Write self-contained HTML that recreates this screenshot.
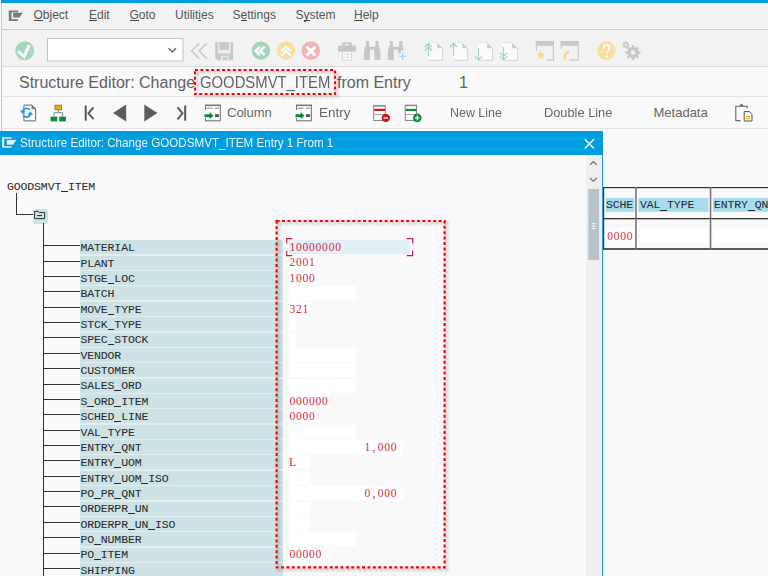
<!DOCTYPE html>
<html><head><meta charset="utf-8"><style>
*{margin:0;padding:0;box-sizing:border-box}
html,body{width:768px;height:576px;overflow:hidden;background:#f9f9f9;font-family:"Liberation Sans",sans-serif;position:relative}
.a{position:absolute}
.t{position:absolute;white-space:nowrap;line-height:1}
.menu{font-size:12px;color:#555;top:9px}
.menu u{text-decoration:none;position:relative}
.menu u:after{content:"";position:absolute;left:0;right:0;top:12px;height:1px;background:#444}
.atb{font-size:13px;color:#666;top:105.6px}
.mono{font-family:"Liberation Mono",monospace}
.lbl{position:absolute;left:80px;width:203px;height:14px;background:#cce2e5}
.lt{position:absolute;left:80.5px;font-family:"Liberation Mono",monospace;font-size:11.5px;letter-spacing:-0.13px;color:#2a2a2a;line-height:14px;white-space:nowrap;-webkit-text-stroke:0.05px #2a2a2a}
.lt i{display:inline-block;width:6.77px;height:1px;background:#2a2a2a;vertical-align:-2.3px}
.hc{position:absolute;left:43px;width:37px;height:1px;background:#333}
.vf{position:absolute;left:289px;height:14px;background:#fff}
.vt{position:absolute;font-family:"Liberation Serif",serif;font-size:11.6px;color:#d42c3c;line-height:14px;white-space:nowrap}
.vt span{display:inline-block;width:6.56px;text-align:center}
</style></head><body>
<div class="a" style="left:0;top:0;width:768px;height:3px;background:#009ddf"></div>
<div class="a" style="left:0;top:3px;width:768px;height:1px;background:#fbf5f1"></div>
<div class="a" style="left:0;top:4px;width:768px;height:25px;background:#f2f2f2"></div>
<div class="a" style="left:0;top:29px;width:768px;height:1px;background:#cacaca"></div>
<div class="a" style="left:0;top:30px;width:768px;height:36px;background:#f2f2f2"></div>
<div class="a" style="left:0;top:66px;width:768px;height:1px;background:#dcdcdc"></div>
<div class="a" style="left:0;top:96px;width:768px;height:1px;background:#e4e4e4"></div>
<div class="a" style="left:0;top:128px;width:768px;height:1px;background:#e4e4e4"></div>
<div class="a" style="left:0;top:0;width:1px;height:131px;background:#fafafa"></div>
<div class="a" style="left:1px;top:3px;width:1px;height:128px;background:#c8c8c8"></div>
<svg class="a" style="left:8px;top:10px" width="16" height="12" viewBox="0 0 16 12">
<path d="M0.8 0.6H10V2.2H3.5V9.3H10V10.9H0.8Z" fill="#7a7a7a"/><path d="M5.1 2.8H14.8L11.6 7.5H5.1Z" fill="#7a7a7a"/></svg>
<div class="t menu" style="left:33.5px"><u>O</u>bject</div>
<div class="t menu" style="left:89px"><u>E</u>dit</div>
<div class="t menu" style="left:129.5px"><u>G</u>oto</div>
<div class="t menu" style="left:175px">Utilit<u>i</u>es</div>
<div class="t menu" style="left:232.5px">S<u>e</u>ttings</div>
<div class="t menu" style="left:295.5px">S<u>y</u>stem</div>
<div class="t menu" style="left:354px"><u>H</u>elp</div>

<svg class="a" style="left:0;top:30px" width="768" height="36" viewBox="0 30 768 36">
 <circle cx="24.7" cy="50.8" r="9.5" fill="#a8d6bd"/>
 <path d="M19.3 52.3L23.9 56.6L28.6 46.6" fill="none" stroke="#fff" stroke-width="3" stroke-linecap="square"/>
 <rect x="47.5" y="38.5" width="135.5" height="22.5" fill="#fff" stroke="#c2c2c2" stroke-width="1"/>
 <path d="M168.5 48.3L172.3 52L176.1 48.3" fill="none" stroke="#666" stroke-width="1.3"/>
 <path d="M199.2 43.4L191.6 50.9L199.2 58.6M206.7 43.4L199.1 50.9L206.7 58.6" fill="none" stroke="#cbcbcb" stroke-width="1.6"/>
 <path d="M215.2 42.1H233.1V60.3H217.5L215.2 58Z" fill="#c9c9c9"/>
 <rect x="217.8" y="42.1" width="12.7" height="11.4" fill="#efefef"/>
 <rect x="219.2" y="42.1" width="9.8" height="7.8" fill="#c9c9c9"/>
 <rect x="220.8" y="55.8" width="7.6" height="4.5" fill="#e6e6e6"/>
 <rect x="223" y="57" width="4" height="3.3" fill="#c9c9c9"/>
 <circle cx="260.9" cy="50.6" r="9.2" fill="#a3d5b9"/>
 <path d="M259.8 46.6L255.6 50.8L259.8 55M264.6 46.6L260.4 50.8L264.6 55" fill="none" stroke="#fff" stroke-width="2.5"/>
 <circle cx="286" cy="50.6" r="9.2" fill="#f8dea2"/>
 <path d="M281.2 51.2L286 47L290.8 51.2M281.2 55.4L286 51.2L290.8 55.4" fill="none" stroke="#fff" stroke-width="2.3"/>
 <circle cx="310.8" cy="50.6" r="9.3" fill="#f0b5b6"/>
 <path d="M306.6 46.8L315.2 55.4M315.2 46.8L306.6 55.4" fill="none" stroke="#fff" stroke-width="3"/>
 <!-- printer -->
 <rect x="342.1" y="42.3" width="9.7" height="4" rx="1" fill="#c9c9c9"/>
 <rect x="344.8" y="43.8" width="4.3" height="2.5" fill="#ededed"/>
 <rect x="338" y="45.6" width="18" height="6.2" rx="1.2" fill="#c6c6c6"/>
 <rect x="352" y="46.4" width="3" height="1.2" fill="#9ed4ee"/>
 <rect x="342.6" y="51.6" width="9" height="8.6" fill="#fafafa" stroke="#d2d2d2" stroke-width="0.9"/>
 <rect x="344.6" y="53.9" width="5" height="0.9" fill="#b0dbf0"/>
 <rect x="344.6" y="56.8" width="5" height="0.9" fill="#b0dbf0"/>
 <!-- binoculars -->
 <g fill="#c7c7c7">
 <path d="M366 41H369V45.2L370 47.5V59.2Q370 60 369.2 60H364.8Q364 60 364 59.2V52L365.2 47L366 45.2Z"/>
 <path d="M375.5 41H378.5V45.2L379.3 47L380.4 52V59.2Q380.4 60 379.6 60H375.2Q374.4 60 374.4 59.2V47.5L375.5 45.2Z"/>
 <rect x="369.5" y="46.8" width="5.4" height="2.8"/>
 <path d="M389.8 41H392.8V45.2L393.8 47.5V59.2Q393.8 60 393 60H388.6Q387.8 60 387.8 59.2V52L389 47L389.8 45.2Z"/>
 <path d="M399.3 41H402.3V45.2L403.1 47L403.6 50.6H400.8V53.6H398.2V47.5L399.3 45.2Z"/>
 <rect x="393.3" y="46.8" width="5.4" height="2.8"/>
 </g>
 <path d="M402.6 53V60.1M399 56.3H406.2" stroke="#92d0ee" stroke-width="1.1"/>
 <!-- pages -->
 <path d="M428.1 42.7H437.1L442.6 48.2V60.3H428.1Z" fill="#fbfbfb"/><path d="M442.6 48V60.3H428.6" fill="none" stroke="#d2d2d2" stroke-width="1"/><path d="M437.1 42.7V48.2H442.6Z" fill="#cdcdcd"/><path d="M428.1 42.7H437.1" stroke="#e4e4e4" stroke-width="1"/><path d="M428.5 43.5V56M424.9 47L428.5 43.5L432.1 47M424.9 50.5L428.5 47L432.1 50.5" fill="none" stroke="#9ed3b4" stroke-width="1.1"/><path d="M453.2 42.7H462.2L467.7 48.2V60.3H453.2Z" fill="#fbfbfb"/><path d="M467.7 48V60.3H453.7" fill="none" stroke="#d2d2d2" stroke-width="1"/><path d="M462.2 42.7V48.2H467.7Z" fill="#cdcdcd"/><path d="M453.2 42.7H462.2" stroke="#e4e4e4" stroke-width="1"/><path d="M453.59999999999997 43.5V56M449.99999999999994 47L453.59999999999997 43.5L457.2 47" fill="none" stroke="#9ed3b4" stroke-width="1.1"/><path d="M478.1 42.7H487.1L492.6 48.2V60.3H478.1Z" fill="#fbfbfb"/><path d="M492.6 48V60.3H478.6" fill="none" stroke="#d2d2d2" stroke-width="1"/><path d="M487.1 42.7V48.2H492.6Z" fill="#cdcdcd"/><path d="M478.1 42.7H487.1" stroke="#e4e4e4" stroke-width="1"/><path d="M478.5 48V59.8M474.9 56.3L478.5 59.8L482.1 56.3" fill="none" stroke="#9ed3b4" stroke-width="1.1"/><path d="M503.2 42.7H512.2L517.7 48.2V60.3H503.2Z" fill="#fbfbfb"/><path d="M517.7 48V60.3H503.7" fill="none" stroke="#d2d2d2" stroke-width="1"/><path d="M512.2 42.7V48.2H517.7Z" fill="#cdcdcd"/><path d="M503.2 42.7H512.2" stroke="#e4e4e4" stroke-width="1"/><path d="M503.59999999999997 47V59.8M499.99999999999994 52.8L503.59999999999997 56.3L507.2 52.8M499.99999999999994 56.3L503.59999999999997 59.8L507.2 56.3" fill="none" stroke="#9ed3b4" stroke-width="1.1"/>
 <!-- windows -->
 <rect x="535.8" y="41" width="18.2" height="4.8" fill="#c9c9c9"/>
 <path d="M536.4 45.5V51M553.4 45.5V60.2H546.6" fill="none" stroke="#c9c9c9" stroke-width="1.2"/>
 <path d="M540.8 50.6L542.1 53.6L545.3 53.8L542.8 55.9L543.7 59L540.8 57.3L537.9 59L538.8 55.9L536.3 53.8L539.5 53.6Z" fill="#f5d88c"/>
 <rect x="560.5" y="41" width="18.4" height="4.8" fill="#c9c9c9"/>
 <path d="M561.1 45.5V48.5M578.3 45.5V60.2H568.9" fill="none" stroke="#c9c9c9" stroke-width="1.2"/>
 <path d="M564.5 60C563 57 563.2 54 566 52.3L565.5 50.8L569.8 51.2L568.3 55L567.5 53.8C566 55 565.8 57.3 566.6 59.5Z" fill="#f5d88c"/>
 <circle cx="606.4" cy="50.6" r="9.3" fill="#f8dfa4"/>
 <path d="M603.6 48.4C603.6 46 605 44.9 606.6 44.9C608.4 44.9 609.6 46.1 609.6 47.8C609.6 50 607 50.3 607 53V53.6" fill="none" stroke="#fff" stroke-width="1.6"/>
 <rect x="606.1" y="55.4" width="1.8" height="1.8" fill="#fff"/>
 <!-- gears -->
 <g fill="#c8c8c8">
  <circle cx="633" cy="52.6" r="5.6"/>
  <g stroke="#c8c8c8" stroke-width="2.6">
   <path d="M633 45.2V60M625.6 52.6H640.4M627.8 47.4L638.2 57.8M638.2 47.4L627.8 57.8"/>
  </g>
  <circle cx="625.9" cy="44.8" r="2.6"/>
  <g stroke="#c8c8c8" stroke-width="1.3"><path d="M625.9 41.2V48.4M622.3 44.8H629.5M623.4 42.3L628.4 47.3M628.4 42.3L623.4 47.3"/></g>
 </g>
 <circle cx="633" cy="52.6" r="2.3" fill="#f2f2f2"/>
 <circle cx="625.9" cy="44.8" r="1.1" fill="#f2f2f2"/>
</svg>
<div class="t" style="left:19px;top:74.6px;font-size:16px;color:#626262">Structure Editor: Change</div>
<div class="t" style="left:200px;top:74.6px;font-size:16px;color:#626262;transform:scaleX(0.928);transform-origin:0 0">GOODSMVT_ITEM</div>
<div class="t" style="left:337px;top:74.6px;font-size:16px;color:#626262">from Entry</div>
<div class="t" style="left:459px;top:74.6px;font-size:16px;color:#626262">1</div>
<svg class="a" style="left:190px;top:66px;overflow:visible" width="150" height="32" viewBox="190 66 150 32">
<defs><filter id="sh" x="-20%" y="-50%" width="140%" height="200%"><feGaussianBlur in="SourceAlpha" stdDeviation="1.5"/><feOffset dx="1.5" dy="1.5"/><feComponentTransfer><feFuncA type="linear" slope="0.35"/></feComponentTransfer><feMerge><feMergeNode/><feMergeNode in="SourceGraphic"/></feMerge></filter></defs>
<rect x="195" y="70.1" width="140.1" height="24" fill="none" stroke="#ff0000" stroke-width="2" stroke-dasharray="3 2.4" filter="url(#sh)"/>
</svg>
<svg class="a" style="left:0;top:97px" width="768" height="31" viewBox="0 97 768 31">
 <!-- refresh doc -->
 <path d="M23.9 105.1H32L35.6 108.7V120.9H23.9Z" fill="#fff" stroke="#666" stroke-width="1"/>
 <path d="M32 105.1V108.7H35.6" fill="#888" stroke="#666" stroke-width="0.8"/>
 <path d="M29.8 109.8A4.2 4.2 0 0 0 22.6 111.5" fill="none" stroke="#1a9fe6" stroke-width="1.8"/>
 <path d="M20 110.5L22.9 114.2L25.6 110.8Z" fill="#1a9fe6"/>
 <path d="M23.4 115.6A4.2 4.2 0 0 0 30.6 113.9" fill="none" stroke="#1a9fe6" stroke-width="1.8"/>
 <path d="M33.2 114.9L30.3 111.2L27.6 114.6Z" fill="#1a9fe6"/>
 <!-- hierarchy -->
 <rect x="54.9" y="105.1" width="6.8" height="4.8" fill="#f2aa00" stroke="#6b5a2e" stroke-width="0.6"/>
 <path d="M58.3 110V112.7M54 116.6V112.7H62.6V116.6" fill="none" stroke="#6a7e8a" stroke-width="0.9"/>
 <rect x="50.6" y="116.6" width="6.6" height="4.8" fill="#0f8b3a"/>
 <rect x="59.3" y="116.6" width="6.6" height="4.8" fill="#0f8b3a"/>
 <!-- first -->
 <path d="M85.7 105.4V120.7" stroke="#555" stroke-width="2"/>
 <path d="M93.5 107.4L88.4 113.3L93.5 119.2" fill="none" stroke="#555" stroke-width="1.9"/>
 <path d="M126.2 104.5V121.4L113 113Z" fill="#5c5c5c"/>
 <path d="M144.3 104.5V121.4L157.4 113Z" fill="#5c5c5c"/>
 <path d="M177.5 107.4L182.6 113.3L177.5 119.3" fill="none" stroke="#555" stroke-width="1.9"/>
 <path d="M185.2 105.5V120.7" stroke="#555" stroke-width="2"/>
 <!-- column/entry icons -->
 <path d="M205.0 104.9H220.8V121H205.0" fill="#fff"/><rect x="205.0" y="104.5" width="15.8" height="1.6" fill="#7a7a7a"/><path d="M220.3 105V120.8H205.0" fill="none" stroke="#666" stroke-width="1"/><path d="M205.5 105V110M205.5 118V121" fill="none" stroke="#777" stroke-width="1"/><rect x="206.6" y="107.6" width="6" height="1.2" fill="#9a9a9a"/><rect x="215.0" y="107.6" width="4" height="1.2" fill="#9a9a9a"/><path d="M204.5 114.2H209.6V112.3L213.6 115.7L209.6 119.1V117.2H204.5Z" fill="#0b8a36"/><rect x="215.0" y="114.2" width="4" height="2.8" fill="#555"/><path d="M296.0 104.9H311.8V121H296.0" fill="#fff"/><rect x="296.0" y="104.5" width="15.8" height="1.6" fill="#7a7a7a"/><path d="M311.3 105V120.8H296.0" fill="none" stroke="#666" stroke-width="1"/><path d="M296.5 105V110M296.5 118V121" fill="none" stroke="#777" stroke-width="1"/><rect x="297.6" y="107.6" width="6" height="1.2" fill="#9a9a9a"/><rect x="306.0" y="107.6" width="4" height="1.2" fill="#9a9a9a"/><path d="M295.5 114.2H300.6V112.3L304.6 115.7L300.6 119.1V117.2H295.5Z" fill="#0b8a36"/><rect x="306.0" y="114.2" width="4" height="2.8" fill="#555"/>
 <!-- delete row -->
 <rect x="373.7" y="105.6" width="11.6" height="14.8" fill="#fff" stroke="#777" stroke-width="0.9"/>
 <rect x="373.7" y="105.3" width="11.6" height="1.3" fill="#8a8a8a"/>
 <rect x="374.2" y="108.8" width="10.8" height="2.2" fill="#d11a1f"/>
 <rect x="374.2" y="114" width="10.8" height="0.9" fill="#999"/>
 <circle cx="385.8" cy="117.9" r="4.2" fill="#d0161c"/>
 <rect x="383.6" y="117.3" width="4.4" height="1.4" fill="#fff"/>
 <!-- insert row -->
 <rect x="405.2" y="105.2" width="11.4" height="15.2" fill="#fff" stroke="#777" stroke-width="0.9"/>
 <rect x="405.2" y="104.9" width="11.4" height="1.3" fill="#8a8a8a"/>
 <rect x="405.7" y="108.9" width="10.6" height="2.2" fill="#0f8b3a"/>
 <rect x="405.7" y="114" width="10.6" height="0.9" fill="#999"/>
 <circle cx="417.3" cy="117.9" r="4.3" fill="#0f8b3a"/>
 <path d="M415 117.9H419.6M417.3 115.6V120.2" stroke="#fff" stroke-width="1.2"/>
 <!-- clipboard -->
 <path d="M740.5 120.6H735.8V106.3H747.2V108.3" fill="none" stroke="#666" stroke-width="1.1"/>
 <path d="M739.6 106.3L741.5 104.4L743.4 106.3" fill="none" stroke="#666" stroke-width="1.1"/>
 <path d="M744.2 111.6H749.4L752 114.2V121H744.2Z" fill="#fff" stroke="#555" stroke-width="1"/>
 <rect x="745.8" y="116" width="4.4" height="1.1" fill="#f0a000"/>
 <rect x="745.8" y="118.1" width="4.4" height="1.1" fill="#f0a000"/>
</svg>
<div class="t atb" style="left:227px;transform:scaleX(1);transform-origin:0 0">Column</div>
<div class="t atb" style="left:318.5px;transform:scaleX(1.04);transform-origin:0 0">Entry</div>
<div class="t atb" style="left:449.5px;transform:scaleX(0.957);transform-origin:0 0">New Line</div>
<div class="t atb" style="left:543.5px;transform:scaleX(0.985);transform-origin:0 0">Double Line</div>
<div class="t atb" style="left:653.5px;transform:scaleX(1);transform-origin:0 0">Metadata</div>
<div class="a" style="left:0;top:131px;width:603px;height:24px;background:#009ddf"></div>
<svg class="a" style="left:0;top:131px" width="20" height="24" viewBox="0 131 20 24">
<path d="M2.1 137.2H11.5V138.8H4.2V146.2H11.5V147.8H2.1Z" fill="#e6eef3"/><path d="M6.9 140.1H16.3L13.1 144.7H6.9Z" fill="#e6eef3"/></svg>
<div class="t" style="left:19.5px;top:136.7px;font-size:12.5px;color:#eaf4fa;transform:scaleX(0.93);transform-origin:0 0">Structure Editor: Change GOODSMVT_ITEM Entry 1 From 1</div>
<svg class="a" style="left:580px;top:131px" width="23" height="24" viewBox="580 131 23 24">
<path d="M584.8 139.3L594 148.5M594 139.3L584.8 148.5" stroke="#eef6fb" stroke-width="1.6"/></svg>
<div class="a" style="left:586px;top:155px;width:16px;height:421px;background:#efefef"></div>
<div class="a" style="left:602px;top:155px;width:1px;height:421px;background:#1a9fe0"></div>
<svg class="a" style="left:586px;top:155px" width="16" height="110" viewBox="586 155 16 110">
<path d="M590 164.8L593.3 161.6L596.7 164.8M590 178L593.3 181.3L596.7 178" fill="none" stroke="#666" stroke-width="1.1"/>
<rect x="588.3" y="189" width="10.8" height="71" fill="#b7c2cb"/>
<rect x="591.8" y="223.2" width="3.8" height="1" fill="#fff"/>
<rect x="591.8" y="225.6" width="3.8" height="1" fill="#fff"/>
<rect x="591.8" y="228" width="3.8" height="1" fill="#fff"/>
</svg>
<div class="lt" style="left:7px;top:179.8px">GOODSMVT<i></i>ITEM</div>
<div class="a" style="left:16px;top:193px;width:1px;height:22px;background:#333"></div>
<div class="a" style="left:16px;top:214px;width:17px;height:1px;background:#333"></div>
<div class="a" style="left:33px;top:209px;width:15px;height:15px;background:#cce2e5;border-radius:2px"></div>
<svg class="a" style="left:33px;top:209px" width="15" height="15" viewBox="33 209 15 15">
<path d="M34.6 211.4H38.4L39.4 212.5H44.6V218.6H34.6Z" fill="none" stroke="#2a2a2a" stroke-width="0.95"/>
<rect x="37.2" y="215" width="4.8" height="1.1" fill="#333"/></svg>
<div class="a" style="left:43px;top:223px;width:1px;height:353px;background:#333"></div>
<div class="a" style="left:80px;top:254px;width:203px;height:322px;background:#e3edee"></div>
<div class="lbl" style="top:240.40px"></div>
<div class="hc" style="top:245.30px"></div>
<div class="lt" style="top:241px">MATERIAL</div>
<div class="vf" style="top:240.40px;width:121px;background:#e3eff7"></div>
<div class="vt" style="top:241.10px;left:289px"><span>1</span><span>0</span><span>0</span><span>0</span><span>0</span><span>0</span><span>0</span><span>0</span></div>
<div class="lbl" style="top:255.76px"></div>
<div class="hc" style="top:260.66px"></div>
<div class="lt" style="top:257px">PLANT</div>
<div class="vf" style="top:255.76px;width:27px"></div>
<div class="vt" style="top:256.46px;left:289px"><span>2</span><span>0</span><span>0</span><span>1</span></div>
<div class="lbl" style="top:271.12px"></div>
<div class="hc" style="top:276.02px"></div>
<div class="lt" style="top:272px">STGE<i></i>LOC</div>
<div class="vf" style="top:271.12px;width:27px"></div>
<div class="vt" style="top:271.82px;left:289px"><span>1</span><span>0</span><span>0</span><span>0</span></div>
<div class="lbl" style="top:286.48px"></div>
<div class="hc" style="top:291.38px"></div>
<div class="lt" style="top:287px">BATCH</div>
<div class="vf" style="top:286.48px;width:67px"></div>
<div class="lbl" style="top:301.84px"></div>
<div class="hc" style="top:306.74px"></div>
<div class="lt" style="top:303px">MOVE<i></i>TYPE</div>
<div class="vf" style="top:301.84px;width:20px"></div>
<div class="vt" style="top:302.54px;left:289px"><span>3</span><span>2</span><span>1</span></div>
<div class="lbl" style="top:317.20px"></div>
<div class="hc" style="top:322.10px"></div>
<div class="lt" style="top:318px">STCK<i></i>TYPE</div>
<div class="vf" style="top:317.20px;width:7px"></div>
<div class="lbl" style="top:332.56px"></div>
<div class="hc" style="top:337.46px"></div>
<div class="lt" style="top:333px">SPEC<i></i>STOCK</div>
<div class="vf" style="top:332.56px;width:7px"></div>
<div class="lbl" style="top:347.92px"></div>
<div class="hc" style="top:352.82px"></div>
<div class="lt" style="top:349px">VENDOR</div>
<div class="vf" style="top:347.92px;width:67px"></div>
<div class="lbl" style="top:363.28px"></div>
<div class="hc" style="top:368.18px"></div>
<div class="lt" style="top:364px">CUSTOMER</div>
<div class="vf" style="top:363.28px;width:67px"></div>
<div class="lbl" style="top:378.64px"></div>
<div class="hc" style="top:383.54px"></div>
<div class="lt" style="top:379px">SALES<i></i>ORD</div>
<div class="vf" style="top:378.64px;width:67px"></div>
<div class="lbl" style="top:394.00px"></div>
<div class="hc" style="top:398.90px"></div>
<div class="lt" style="top:395px">S<i></i>ORD<i></i>ITEM</div>
<div class="vf" style="top:394.00px;width:40px"></div>
<div class="vt" style="top:394.70px;left:289px"><span>0</span><span>0</span><span>0</span><span>0</span><span>0</span><span>0</span></div>
<div class="lbl" style="top:409.36px"></div>
<div class="hc" style="top:414.26px"></div>
<div class="lt" style="top:410px">SCHED<i></i>LINE</div>
<div class="vf" style="top:409.36px;width:27px"></div>
<div class="vt" style="top:410.06px;left:289px"><span>0</span><span>0</span><span>0</span><span>0</span></div>
<div class="lbl" style="top:424.72px"></div>
<div class="hc" style="top:429.62px"></div>
<div class="lt" style="top:426px">VAL<i></i>TYPE</div>
<div class="vf" style="top:424.72px;width:67px"></div>
<div class="lbl" style="top:440.08px"></div>
<div class="hc" style="top:444.98px"></div>
<div class="lt" style="top:441px">ENTRY<i></i>QNT</div>
<div class="vf" style="top:440.08px;width:114px"></div>
<div class="vt" style="top:440.78px;left:364.2px"><span>1</span><span>,</span><span>0</span><span>0</span><span>0</span></div>
<div class="lbl" style="top:455.44px"></div>
<div class="hc" style="top:460.34px"></div>
<div class="lt" style="top:456px">ENTRY<i></i>UOM</div>
<div class="vf" style="top:455.44px;width:20px"></div>
<div class="vt" style="top:456.14px;left:289px"><span>L</span></div>
<div class="lbl" style="top:470.80px"></div>
<div class="hc" style="top:475.70px"></div>
<div class="lt" style="top:472px">ENTRY<i></i>UOM<i></i>ISO</div>
<div class="vf" style="top:470.80px;width:20px"></div>
<div class="lbl" style="top:486.16px"></div>
<div class="hc" style="top:491.06px"></div>
<div class="lt" style="top:487px">PO<i></i>PR<i></i>QNT</div>
<div class="vf" style="top:486.16px;width:114px"></div>
<div class="vt" style="top:486.86px;left:364.2px"><span>0</span><span>,</span><span>0</span><span>0</span><span>0</span></div>
<div class="lbl" style="top:501.52px"></div>
<div class="hc" style="top:506.42px"></div>
<div class="lt" style="top:502px">ORDERPR<i></i>UN</div>
<div class="vf" style="top:501.52px;width:20px"></div>
<div class="lbl" style="top:516.88px"></div>
<div class="hc" style="top:521.78px"></div>
<div class="lt" style="top:518px">ORDERPR<i></i>UN<i></i>ISO</div>
<div class="vf" style="top:516.88px;width:20px"></div>
<div class="lbl" style="top:532.24px"></div>
<div class="hc" style="top:537.14px"></div>
<div class="lt" style="top:533px">PO<i></i>NUMBER</div>
<div class="vf" style="top:532.24px;width:67px"></div>
<div class="lbl" style="top:547.60px"></div>
<div class="hc" style="top:552.50px"></div>
<div class="lt" style="top:548px">PO<i></i>ITEM</div>
<div class="vf" style="top:547.60px;width:33px"></div>
<div class="vt" style="top:548.30px;left:289px"><span>0</span><span>0</span><span>0</span><span>0</span><span>0</span></div>
<div class="lbl" style="top:562.96px"></div>
<div class="hc" style="top:567.86px"></div>
<div class="lt" style="top:564px">SHIPPING</div>
<svg class="a" style="left:280px;top:232px" width="140" height="30" viewBox="280 232 140 30">
<path d="M292.2 238.6H286.7V243M286.7 251V255.6H292.2M406.8 238.6H412.6V243.5M412.6 250.6V255.6H406.8" fill="none" stroke="#c8203a" stroke-width="1.2"/><rect x="349.2" y="248.2" width="0.9" height="0.9" fill="#d3dee5"/><rect x="355.3" y="248.2" width="0.9" height="0.9" fill="#d3dee5"/><rect x="361.4" y="248.2" width="0.9" height="0.9" fill="#d3dee5"/><rect x="367.5" y="248.2" width="0.9" height="0.9" fill="#d3dee5"/><rect x="373.6" y="248.2" width="0.9" height="0.9" fill="#d3dee5"/><rect x="379.7" y="248.2" width="0.9" height="0.9" fill="#d3dee5"/><rect x="385.8" y="248.2" width="0.9" height="0.9" fill="#d3dee5"/><rect x="391.9" y="248.2" width="0.9" height="0.9" fill="#d3dee5"/><rect x="398.0" y="248.2" width="0.9" height="0.9" fill="#d3dee5"/><rect x="404.1" y="248.2" width="0.9" height="0.9" fill="#d3dee5"/></svg>
<svg class="a" style="left:270px;top:215px;overflow:visible" width="185" height="361" viewBox="270 215 185 361">
<defs><filter id="sh2" x="-20%" y="-20%" width="140%" height="140%"><feGaussianBlur in="SourceAlpha" stdDeviation="1.6"/><feOffset dx="1.5" dy="1.5"/><feComponentTransfer><feFuncA type="linear" slope="0.35"/></feComponentTransfer><feMerge><feMergeNode/><feMergeNode in="SourceGraphic"/></feMerge></filter></defs>
<rect x="276.6" y="221" width="168" height="346.4" fill="none" stroke="#ff0000" stroke-width="2.2" stroke-dasharray="3 2.4" filter="url(#sh2)"/>
</svg>
<svg class="a" style="left:603px;top:180px" width="165" height="80" viewBox="603 180 165 80">
<rect x="605.8" y="197.9" width="28.6" height="13.9" fill="#a7dcef"/>
<rect x="638.3" y="197.9" width="70.2" height="13.9" fill="#a7dcef"/>
<rect x="713" y="197.9" width="55" height="13.9" fill="#a7dcef"/>
<rect x="639.9" y="228.5" width="68" height="14.2" fill="#fff"/>
<rect x="713.5" y="228.5" width="55" height="14.2" fill="#fff"/>
<rect x="606" y="228.3" width="28.4" height="14.4" fill="#fff"/>
<rect x="603" y="187" width="165" height="1.2" fill="#333"/>
<rect x="603" y="218" width="165" height="1.3" fill="#333"/>
<rect x="603" y="248.2" width="165" height="1.6" fill="#333"/>
<rect x="603" y="187" width="1.2" height="62.8" fill="#333"/>
<rect x="635.2" y="187" width="1.5" height="62.8" fill="#707070"/>
<rect x="709.8" y="187" width="1.5" height="62.8" fill="#707070"/>
</svg>
<div class="lt" style="left:606px;top:198.4px">SCHE</div>
<div class="lt" style="left:640px;top:198.4px">VAL<i></i>TYPE</div>
<div class="lt" style="left:714px;top:198.4px">ENTRY<i></i>QNT</div>
<div class="vt" style="left:606.8px;top:229.5px"><span>0</span><span>0</span><span>0</span><span>0</span></div>
</body></html>
